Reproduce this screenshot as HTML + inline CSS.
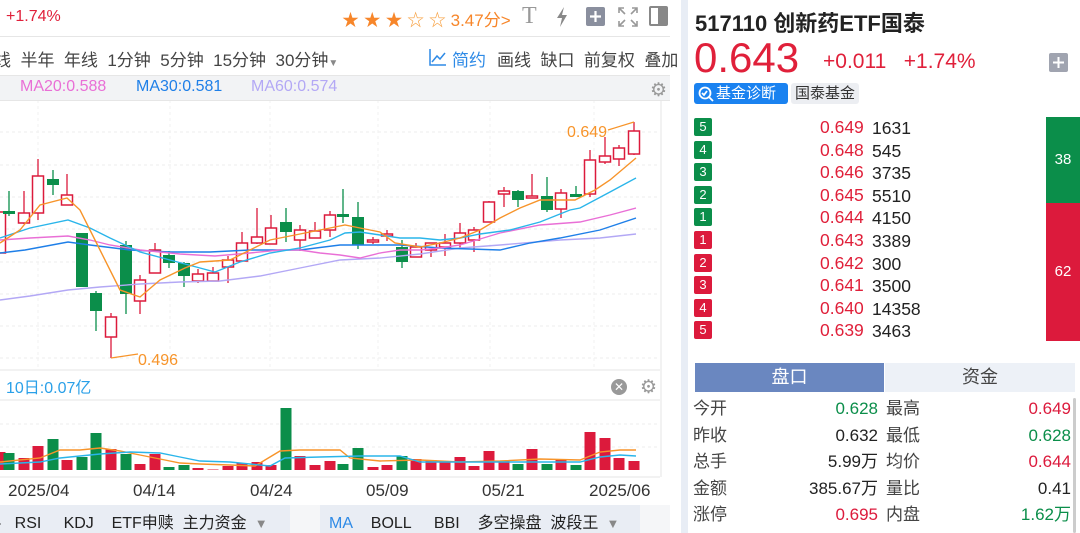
<!DOCTYPE html>
<html><head><meta charset="utf-8"><style>
*{margin:0;padding:0;box-sizing:border-box}
body{width:1080px;height:533px;overflow:hidden;background:#fff;font-family:"Liberation Sans","Noto Sans CJK SC",sans-serif;position:relative;color:#222}
.a{position:absolute;white-space:nowrap}
.red{color:#e0203a}.grn{color:#0b8e4a}
.r{line-height:22px;height:22px}
</style></head><body>
<svg class="a" id="ch" style="left:0;top:0" width="662" height="533"></svg>
<div class="a red" style="left:6px;top:8px;font-size:16px">+1.74%</div>
<div class="a" style="left:342px;top:6px;font-size:17px;color:#f7862a">★ ★ ★ <span style="color:#f7a040">☆ ☆</span> 3.47分&gt;</div>
<div class="a" style="left:522px;top:3px;font-size:24px;color:#999;font-family:'Liberation Serif',serif">T</div>
<svg class="a" style="left:555px;top:7px" width="14" height="20"><path d="M9 0 L2 11 H7 L5 20 L12 8 H7 Z" fill="#888"/></svg>
<svg class="a" style="left:586px;top:7px" width="19" height="19"><rect width="19" height="19" rx="2" fill="#8a8f9e"/><path d="M9.5 4V15M4 9.5H15" stroke="#fff" stroke-width="2.2"/></svg>
<svg class="a" style="left:618px;top:7px" width="20" height="20" fill="none" stroke="#999" stroke-width="1.6"><path d="M1 6V1H6M1 1L7 7M14 1H19V6M19 1L13 7M1 14V19H6M1 19L7 13M19 14V19H14M19 19L13 13"/></svg>
<div class="a" style="left:649px;top:6px;width:19px;height:20px;border:2px solid #888;border-radius:2px"></div>
<div class="a" style="left:658px;top:8px;width:8px;height:16px;background:#888"></div>
<div class="a" style="left:0;top:36px;width:670px;height:1px;background:#e6e6e6"></div>
<div class="a" style="left:-6px;top:46px;font-size:17px;color:#444">线&nbsp; 半年&nbsp; 年线&nbsp; 1分钟&nbsp; 5分钟&nbsp; 15分钟&nbsp; 30分钟<span style="font-size:10px;color:#888">▼</span></div>
<svg class="a" style="left:429px;top:48px" width="18" height="18" fill="none" stroke="#2e8ae6" stroke-width="1.5"><path d="M1 1V17H17M3 14L8 8L11 11L16 5"/></svg>
<div class="a" style="left:452px;top:46px;font-size:17px;color:#2e8ae6">简约</div>
<div class="a" style="left:497px;top:46px;font-size:17px;color:#444">画线&nbsp; 缺口&nbsp; 前复权&nbsp; 叠加</div>
<div class="a" style="left:0;top:75px;width:670px;height:26px;background:#f2f3f5;border-top:1px solid #e6e6e6;border-bottom:1px solid #e6e6e6"></div>
<div class="a" style="left:20px;top:78px;font-size:16px;color:#e96fd6">MA20:0.588</div>
<div class="a" style="left:136px;top:78px;font-size:16px;color:#1e7fe8">MA30:0.581</div>
<div class="a" style="left:251px;top:78px;font-size:16px;color:#b3a8f5">MA60:0.574</div>
<div class="a" style="left:650px;top:79px;font-size:19px;color:#999">⚙</div>
<div class="a" style="left:6px;top:374px;font-size:16px;color:#2aa0e8">10日:0.07亿</div>
<div class="a" style="left:611px;top:379px;width:16px;height:16px;border-radius:50%;background:#999;color:#fff;font-size:12px;text-align:center;line-height:16px">✕</div>
<div class="a" style="left:640px;top:376px;font-size:19px;color:#999">⚙</div>
<div class="a" style="left:0;top:481px;width:662px;font-size:17px;color:#333">
<span class="a" style="left:8px">2025/04</span><span class="a" style="left:133px">04/14</span><span class="a" style="left:250px">04/24</span><span class="a" style="left:366px">05/09</span><span class="a" style="left:482px">05/21</span><span class="a" style="left:589px">2025/06</span></div>
<div class="a" style="left:0;top:505px;width:670px;height:28px;background:#f5f6f8"></div>
<div class="a" style="left:0;top:505px;width:290px;height:28px;background:#e9edf4"></div>
<div class="a" style="left:320px;top:505px;width:320px;height:28px;background:#e9edf4"></div>
<div class="a" style="left:-4px;top:509px;font-size:16px;color:#222">›&nbsp;&nbsp; RSI&nbsp;&nbsp;&nbsp;&nbsp; KDJ&nbsp;&nbsp;&nbsp; ETF申赎&nbsp; 主力资金 <span style="color:#888;font-size:13px">&nbsp;▼</span></div>
<div class="a" style="left:329px;top:509px;font-size:16px;color:#222"><span style="color:#2e8ae6">MA</span>&nbsp;&nbsp;&nbsp; BOLL&nbsp;&nbsp;&nbsp;&nbsp; BBI&nbsp;&nbsp;&nbsp; 多空操盘&nbsp; 波段王 <span style="color:#888;font-size:13px">&nbsp;▼</span></div>
<div class="a" style="left:681px;top:0;width:7px;height:533px;background:#e8edf5"></div>
<div class="a" style="left:695px;top:6px;font-size:22px;font-weight:bold;color:#222">517110 创新药ETF国泰</div>
<div class="a red" style="left:694px;top:34px;font-size:42px">0.643</div>
<div class="a red" style="left:823px;top:50px;font-size:21px">+0.011&nbsp;&nbsp; +1.74%</div>
<svg class="a" style="left:1049px;top:53px" width="19" height="19"><rect width="19" height="19" rx="2" fill="#a0a4b0"/><path d="M9.5 4V15M4 9.5H15" stroke="#fff" stroke-width="2"/></svg>
<div class="a" style="left:694px;top:83px;width:94px;height:21px;background:#1a82f0;border-radius:3px;color:#fff;font-size:15px;line-height:21px;padding-left:22px">基金诊断</div>
<svg class="a" style="left:698px;top:86px" width="16" height="16" fill="none" stroke="#fff" stroke-width="1.8"><circle cx="7" cy="7" r="5.5"/><path d="M11 11L15 15M4 7L6 9L9 5"/></svg>
<div class="a" style="left:791px;top:83px;width:68px;height:21px;background:#eceef2;border-radius:3px;color:#333;font-size:15px;line-height:21px;text-align:center">国泰基金</div>
<div id="ob"></div>
<div class="a" style="left:1046px;top:117px;width:34px;height:86px;background:#0b8e4a;color:#fff;font-size:15px;text-align:center;line-height:86px">38</div>
<div class="a" style="left:1046px;top:203px;width:34px;height:138px;background:#dc1a3c;color:#fff;font-size:15px;text-align:center;line-height:138px">62</div>
<div class="a" style="left:695px;top:363px;width:189px;height:29px;background:#6a87c0;color:#fff;font-size:18px;text-align:center;line-height:29px">盘口</div>
<div class="a" style="left:885px;top:363px;width:190px;height:29px;background:#edf1f7;color:#444;font-size:18px;text-align:center;line-height:29px">资金</div>
<div class="a" style="left:1073px;top:398px;width:3px;height:135px;background:#ccc;border-radius:2px"></div>
<div id="st"></div>
<script>
var s='',R='#dc1a3c',G='#0b8e4a';
for(var y of[100,132,165,197,229,262,294,326,358]) s+='<line x1="0" y1="'+y+'" x2="660" y2="'+y+'" stroke="#eee" stroke-dasharray="3,3"/>';
for(var x of[38,170,270,378,490,594]) s+='<line x1="'+x+'" y1="100" x2="'+x+'" y2="370" stroke="#f2f2f2" stroke-dasharray="3,3"/>';
s+='<line x1="0" y1="370" x2="660" y2="370" stroke="#e6e6e6"/><line x1="0" y1="400" x2="660" y2="400" stroke="#e6e6e6"/><line x1="0" y1="477" x2="660" y2="477" stroke="#e6e6e6"/><line x1="661" y1="100" x2="661" y2="477" stroke="#e6e6e6"/>';
for(var y of[424,447]) s+='<line x1="0" y1="'+y+'" x2="660" y2="'+y+'" stroke="#eee" stroke-dasharray="3,3"/>';
var C=[[0,R,212,253,212,253],[9,G,211,213,191,216],[24,R,213,223,191,224],[38,R,176,213,159,220],[53,G,179,185,170,195],[67,R,195,205,174,205],[82,G,233,287,233,287],[96,G,293,311,291,331],[111,R,317,337,313,358],[126,G,245,294,241,314],[140,R,280,301,275,314],[155,R,250,273,243,273],[169,G,255,263,251,268],[184,G,263,276,262,287],[198,R,274,281,269,283],[213,R,273,281,267,281],[228,R,260,267,256,283],[242,R,243,261,232,261],[257,R,237,243,208,244],[271,R,228,244,215,244],[286,G,222,232,208,242],[300,R,230,240,225,251],[315,R,231,238,222,238],[330,R,215,230,211,237],[343,G,214,216,189,223],[358,G,217,245,202,249],[373,R,240,242,237,244],[387,R,234,236,230,241],[402,G,247,262,240,268],[416,R,247,257,243,257],[431,R,243,250,243,257],[445,R,243,247,234,256],[460,R,233,243,223,248],[474,R,230,240,227,252],[489,R,202,222,201,222],[504,R,191,194,187,207],[518,G,191,200,190,207],[532,R,196,198,174,198],[547,G,196,210,177,212],[561,R,193,209,189,218],[576,G,194,196,186,197],[590,R,160,194,150,197],[605,R,156,162,137,164],[619,R,148,159,145,166],[634,R,131,154,122,155]];
C.forEach(function(c){s+='<line x1="'+c[0]+'" y1="'+c[4]+'" x2="'+c[0]+'" y2="'+c[5]+'" stroke="'+c[1]+'" stroke-width="1.3"/>';
 if(c[1]==R) s+='<rect x="'+(c[0]-5.5)+'" y="'+c[2]+'" width="11" height="'+Math.max(2,c[3]-c[2])+'" fill="#fff" stroke="'+R+'" stroke-width="1.5"/>';
 else s+='<rect x="'+(c[0]-6)+'" y="'+c[2]+'" width="12" height="'+Math.max(3,c[3]-c[2])+'" fill="'+G+'"/>';});
function pl(p,col){s+='<polyline fill="none" stroke="'+col+'" stroke-width="1.4" points="'+p+'"/>';}
pl("0,300 30,296 68,290 100,287 140,284 180,282 220,281 260,276 300,268 340,260 380,258 420,254 460,248 500,245 560,240 600,238 636,234","#b3a8f5");
pl("0,253 25,250 68,242 90,245 130,250 170,252 210,252 250,250 300,250 340,245 370,245 400,245 440,248 500,250 530,243 560,238 600,230 636,218","#1e7fe8");
pl("0,240 30,238 68,236 90,240 110,245 140,250 160,252 180,254 215,256 250,253 280,250 300,250 320,253 340,255 360,258 380,253 400,250 420,250 440,248 460,245 500,233 540,225 580,222 610,215 636,208","#e96fd6");
pl("0,238 30,228 68,220 90,228 110,238 140,252 170,260 200,268 215,272 240,262 270,253 300,248 330,240 345,233 360,232 380,235 400,238 420,238 440,240 460,238 480,234 510,230 540,222 570,210 580,208 610,192 636,178","#2ab5ea");
pl("0,243 20,230 40,205 67,198 80,210 100,250 120,290 140,297 160,280 185,268 200,262 230,260 250,250 270,240 290,236 310,232 330,228 345,225 360,228 380,232 395,243 420,247 440,243 460,238 480,230 500,218 520,208 540,200 560,200 575,200 595,190 610,180 636,158","#f7942a");
s+='<polyline fill="none" stroke="#f7942a" stroke-width="1.2" points="111,358 138,354"/><text x="138" y="365" font-size="16" fill="#f7942a" font-family="Liberation Sans">0.496</text>';
s+='<polyline fill="none" stroke="#f7942a" stroke-width="1.2" points="608,130 634,122"/><text x="567" y="137" font-size="16" fill="#f7942a" font-family="Liberation Sans">0.649</text>';
var V=[[R,452],[G,453],[R,458],[R,446],[G,439],[R,460],[G,457],[G,433],[R,449],[G,454],[R,464],[R,454],[G,467],[G,465],[R,468],['#f08a9a',469],[R,466],[R,463],[R,462],[R,465],[G,408],[R,456],[R,465],[R,461],[G,464],[G,448],[R,467],[R,465],[G,456],[R,459],[R,460],[R,461],[R,457],[R,466],[R,451],[R,461],[G,464],[R,449],[G,464],[R,460],[G,465],[R,432],[R,438],[R,458],[R,461]];
V.forEach(function(v,i){var x=C[i][0];s+='<rect x="'+(x-5.5)+'" y="'+v[1]+'" width="11" height="'+(470-v[1])+'" fill="'+v[0]+'"/>';});
pl("0,462 40,458 60,450 80,450 100,448 120,451 140,455 160,459 180,463 200,464 230,465 255,466 280,451 300,450 340,450 350,458 380,461 420,460 460,462 500,461 540,459 580,460 600,452 620,450 636,450","#f7942a");
pl("0,464 40,462 60,458 80,456 100,454 130,452 160,453 180,457 200,461 230,462 270,466 285,458 320,457 360,456 400,456 420,462 460,462 500,462 540,462 580,462 600,457 620,455 636,456","#2ab5ea");
document.getElementById('ch').innerHTML=s;
var ob='',A=[['5',G,'0.649','1631'],['4',G,'0.648','545'],['3',G,'0.646','3735'],['2',G,'0.645','5510'],['1',G,'0.644','4150'],['1',R,'0.643','3389'],['2',R,'0.642','300'],['3',R,'0.641','3500'],['4',R,'0.640','14358'],['5',R,'0.639','3463']];
A.forEach(function(a,i){var y=118+i*22.6;ob+='<div class="a" style="left:694px;top:'+y+'px;width:18px;height:18px;border-radius:2px;background:'+a[1]+';color:#fff;font-size:13px;text-align:center;line-height:18px">'+a[0]+'</div><div class="a red r" style="left:820px;top:'+(y-2)+'px;font-size:17.5px">'+a[2]+'</div><div class="a r" style="left:872px;top:'+(y-1)+'px;font-size:17.5px;color:#222">'+a[3]+'</div>';});
document.getElementById('ob').innerHTML=ob;
var S=[['今开','0.628',G,'最高','0.649',R],['昨收','0.632','#222','最低','0.628',G],['总手','5.99万','#222','均价','0.644',R],['金额','385.67万','#222','量比','0.41','#222'],['涨停','0.695',R,'内盘','1.62万',G]],st='';
S.forEach(function(r,i){var y=398+i*26.5;st+='<div class="a r" style="left:693px;top:'+y+'px;font-size:17px;color:#444">'+r[0]+'</div><div class="a r" style="left:760px;width:118px;text-align:right;top:'+y+'px;font-size:17px;color:'+r[2]+'">'+r[1]+'</div><div class="a r" style="left:886px;top:'+y+'px;font-size:17px;color:#444">'+r[3]+'</div><div class="a r" style="left:950px;width:121px;text-align:right;top:'+y+'px;font-size:17px;color:'+r[5]+'">'+r[4]+'</div>';});
document.getElementById('st').innerHTML=st;
</script>
</body></html>
